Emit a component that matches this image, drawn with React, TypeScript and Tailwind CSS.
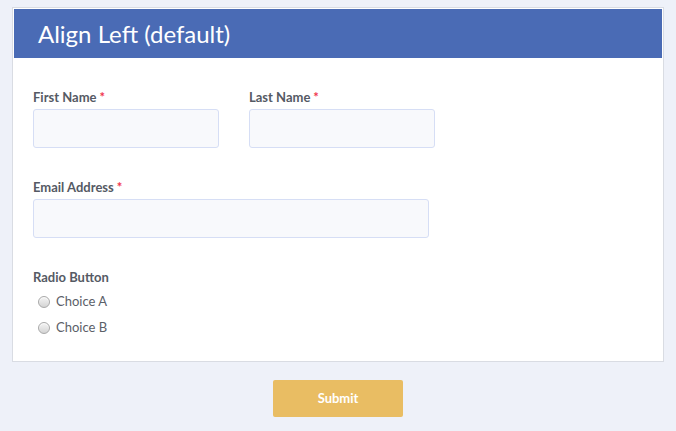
const font = "font-['Lato','Noto_Sans',sans-serif]";

const Label = ({ text, required }: { text: string; required?: boolean }) => (
  <div className="mb-[4px] h-[16px] text-[13px] font-bold leading-[16px] text-[#555a64]">
    {text}
    {required ? <span className="ml-[3px] text-[#f0344d]">*</span> : null}
  </div>
);

const Input = ({ w }: { w: string }) => (
  <div
    className={`${w} h-[39px] rounded-[3px] border border-[#d6def5] bg-[#f8f9fc]`}
  />
);

const Radio = ({ label }: { label: string }) => (
  <div className="flex h-[26px] items-center">
    <span className="ml-[5px] h-[12px] w-[12px] rounded-full border border-[#a9a9a9] bg-[linear-gradient(#f4f4f4,#d4d4d4)] shadow-[inset_0_1px_1px_rgba(255,255,255,0.8)]" />
    <span className="ml-[6px] text-[13px] text-[#5b6068]">{label}</span>
  </div>
);

export default function App() {
  return (
    <div className={`${font} min-h-[431px] w-full bg-[#eef1f9] pt-[7px]`}>
      {/* 카드 */}
      <div className="mx-[12px] w-[652px] border border-[#d9dce3] bg-white p-px">
        <div className="flex h-[49px] items-center bg-[#4a6bb5] pl-[24px]">
          <h1 className="text-[24px] leading-none text-white">Align Left (default)</h1>
        </div>

        <div className="px-[19px] pb-[19px] pt-[31px]">
          {/* 이름 */}
          <div className="flex gap-[30px]">
            <div>
              <Label text="First Name" required />
              <Input w="w-[186px]" />
            </div>
            <div>
              <Label text="Last Name" required />
              <Input w="w-[186px]" />
            </div>
          </div>

          {/* 이메일 */}
          <div className="mt-[31px]">
            <Label text="Email Address" required />
            <Input w="w-[396px]" />
          </div>

          {/* 라디오 */}
          <div className="mt-[31px]">
            <div className="h-[16px] text-[13px] font-bold leading-[16px] text-[#555a64]">
              Radio Button
            </div>
            <div className="mt-[4px]">
              <Radio label="Choice A" />
              <Radio label="Choice B" />
            </div>
          </div>
        </div>
      </div>

      {/* 제출 버튼 */}
      <div className="mt-[18px] flex justify-center">
        <button className="h-[37px] w-[130px] rounded-[2px] bg-[#e9bd63] text-[13px] font-bold text-white">
          Submit
        </button>
      </div>
    </div>
  );
}
